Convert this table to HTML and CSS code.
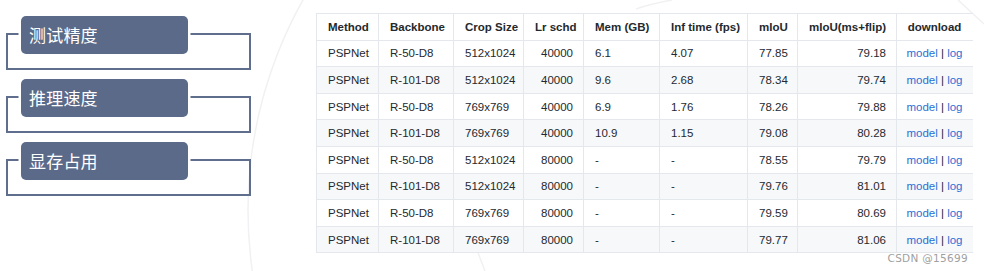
FILE: index.html
```html
<!DOCTYPE html>
<html lang="zh">
<head>
<meta charset="utf-8">
<title>PSPNet</title>
<link rel="stylesheet" href="styles.css">
</head>
<body>
<svg class="backdrop" width="984" height="271" viewBox="0 0 984 271" aria-hidden="true">
  <circle cx="676" cy="210" r="428" fill="none" stroke="#f1f1f3" stroke-width="1.5"/>
  <path d="M636 9 Q650 4 672 0" fill="none" stroke="#f1f1f3" stroke-width="1.5"/>
  <path d="M958 0 L984 24" fill="none" stroke="#f1f1f3" stroke-width="1.5"/>
  <path d="M477 250 L485 271" fill="none" stroke="#f1f1f3" stroke-width="1.5"/>
</svg>
<div class="page">
  <div class="left">
    <div class="group"><span class="pill">测试精度</span></div>
    <div class="group"><span class="pill">推理速度</span></div>
    <div class="group"><span class="pill">显存占用</span></div>
  </div>
  <div class="right">
    <table class="results">
      <colgroup>
        <col class="c1"><col class="c2"><col class="c3"><col class="c4"><col class="c5"><col class="c6"><col class="c7"><col class="c8"><col class="c9">
      </colgroup>
      <thead>
        <tr>
          <th>Method</th><th>Backbone</th><th>Crop Size</th><th class="r">Lr schd</th><th>Mem (GB)</th><th>Inf time (fps)</th><th class="r">mIoU</th><th class="r">mIoU(ms+flip)</th><th class="c">download</th>
        </tr>
      </thead>
      <tbody>
        <tr><td>PSPNet</td><td>R-50-D8</td><td>512x1024</td><td class="r">40000</td><td>6.1</td><td>4.07</td><td class="r">77.85</td><td class="r">79.18</td><td class="c"><a>model</a> | <a>log</a></td></tr>
        <tr><td>PSPNet</td><td>R-101-D8</td><td>512x1024</td><td class="r">40000</td><td>9.6</td><td>2.68</td><td class="r">78.34</td><td class="r">79.74</td><td class="c"><a>model</a> | <a>log</a></td></tr>
        <tr><td>PSPNet</td><td>R-50-D8</td><td>769x769</td><td class="r">40000</td><td>6.9</td><td>1.76</td><td class="r">78.26</td><td class="r">79.88</td><td class="c"><a>model</a> | <a>log</a></td></tr>
        <tr><td>PSPNet</td><td>R-101-D8</td><td>769x769</td><td class="r">40000</td><td>10.9</td><td>1.15</td><td class="r">79.08</td><td class="r">80.28</td><td class="c"><a>model</a> | <a>log</a></td></tr>
        <tr><td>PSPNet</td><td>R-50-D8</td><td>512x1024</td><td class="r">80000</td><td>-</td><td>-</td><td class="r">78.55</td><td class="r">79.79</td><td class="c"><a>model</a> | <a>log</a></td></tr>
        <tr><td>PSPNet</td><td>R-101-D8</td><td>512x1024</td><td class="r">80000</td><td>-</td><td>-</td><td class="r">79.76</td><td class="r">81.01</td><td class="c"><a>model</a> | <a>log</a></td></tr>
        <tr><td>PSPNet</td><td>R-50-D8</td><td>769x769</td><td class="r">80000</td><td>-</td><td>-</td><td class="r">79.59</td><td class="r">80.69</td><td class="c"><a>model</a> | <a>log</a></td></tr>
        <tr><td>PSPNet</td><td>R-101-D8</td><td>769x769</td><td class="r">80000</td><td>-</td><td>-</td><td class="r">79.77</td><td class="r">81.06</td><td class="c"><a>model</a> | <a>log</a></td></tr>
      </tbody>
    </table>
  </div>
</div>
<div class="watermark">CSDN @15699</div>
</body>
</html>
```
FILE: styles.css
```css
html, body {
  margin: 0;
  padding: 0;
  background: #ffffff;
}
body {
  position: relative;
  width: 984px;
  height: 271px;
  overflow: hidden;
  font-family: "Liberation Sans", Arial, sans-serif;
}
.backdrop {
  position: absolute;
  left: 0;
  top: 0;
  z-index: 0;
}
.page {
  position: relative;
  z-index: 1;
  display: flex;
  align-items: flex-start;
}
.left {
  width: 316px;
  box-sizing: border-box;
  padding: 33px 0 0 6px;
  display: flex;
  flex-direction: column;
  gap: 26px;
}
.group {
  position: relative;
  width: 245px;
  height: 37px;
  box-sizing: border-box;
  border: 2px solid #5e6e8c;
}
.pill {
  position: absolute;
  left: 13px;
  top: -19px;
  width: 167px;
  height: 38px;
  box-sizing: border-box;
  padding-left: 8px;
  background: #5b6a89;
  border-radius: 5px;
  box-shadow: 0 0 0 2.5px #ffffff;
  color: #ffffff;
  font-family: "Noto Sans CJK SC", sans-serif;
  font-size: 17px;
  line-height: 38px;
  letter-spacing: 0.2px;
}
.right {
  padding-top: 13px;
}
.results {
  border-collapse: collapse;
  table-layout: fixed;
  width: 656px;
  font-size: 11.5px;
  color: #24292e;
}
.c1 { width: 62px; }
.c2 { width: 75px; }
.c3 { width: 70px; }
.c4 { width: 60px; }
.c5 { width: 76px; }
.c6 { width: 88px; }
.c7 { width: 50px; }
.c8 { width: 99px; }
.c9 { width: 76px; }
.results th,
.results td {
  border: 1px solid #e4e7eb;
  height: 26.6px;
  padding: 0 10px 0 11px;
  text-align: left;
  white-space: nowrap;
  box-sizing: border-box;
}
.results th {
  font-weight: bold;
  background: #ffffff;
}
.results th:last-child,
.results td:last-child {
  border-right-color: transparent;
}
.results tbody tr {
  background: #ffffff;
}
.results tbody tr:nth-child(even) {
  background: #f6f8fa;
}
.results .r { text-align: right; }
.results .c { text-align: center; padding: 0 4px; }
.results a {
  color: #2a6fd6;
  text-decoration: none;
}
.watermark {
  position: absolute;
  right: 16px;
  bottom: 7px;
  z-index: 2;
  font-family: "DejaVu Sans", sans-serif;
  font-size: 10.5px;
  color: #a0a0a0;
  letter-spacing: 0.3px;
}
```
